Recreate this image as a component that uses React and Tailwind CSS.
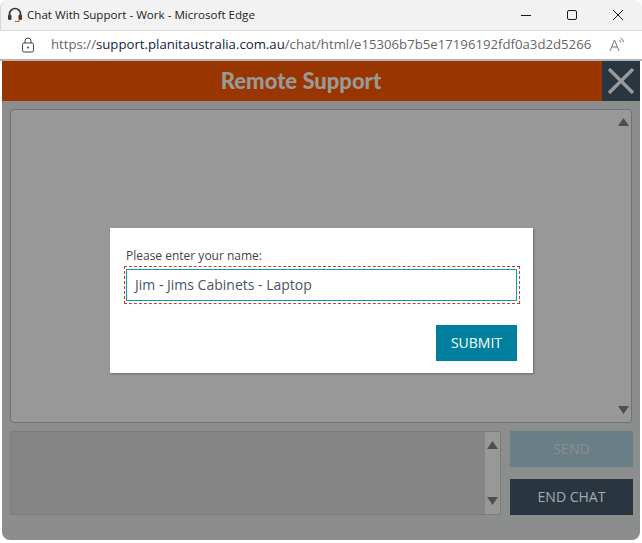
import React from "react";

const ScrollUp = () => (
  <svg width="11" height="8" viewBox="0 0 11 8"><path d="M5.5 0 L11 8 L0 8 Z" fill="#4f4f4f" /></svg>
);
const ScrollDown = () => (
  <svg width="11" height="8" viewBox="0 0 11 8"><path d="M0 0 L11 0 L5.5 8 Z" fill="#4f4f4f" /></svg>
);

const App = () => {
  return (
    <div className="relative w-[642px] h-[543px] overflow-hidden bg-white font-['Open_Sans',sans-serif]">
      {/* Edge title bar */}
      <div className="h-[30px] bg-[#f2f2f2] flex items-center border-l border-[#d8d8d8] rounded-tl-lg rounded-tr-lg">
        <svg className="ml-[6px] shrink-0" width="16" height="16" viewBox="0 0 16 16" fill="none">
          <path d="M2.5 9 V7 A5.5 5.5 0 0 1 13.5 7 V9" stroke="#333" strokeWidth="1.6" />
          <rect x="1" y="7.5" width="3.5" height="5.5" rx="1.5" fill="#3a3a3a" />
          <rect x="11.5" y="7.5" width="3.5" height="5.5" rx="1.5" fill="#3a3a3a" />
          <path d="M8 14.5 H11.5 L13 12.5" stroke="#d9541e" strokeWidth="1.2" />
        </svg>
        <span className="ml-[4px] text-[11.6px] leading-none text-[#222]">Chat With Support - Work - Microsoft Edge</span>
        <div className="ml-auto flex items-center">
          <svg className="mr-[36px]" width="10" height="10" viewBox="0 0 10 10"><path d="M0 5.5 H10" stroke="#1a1a1a" strokeWidth="1" /></svg>
          <svg className="mr-[36px]" width="10" height="10" viewBox="0 0 10 10" fill="none"><rect x="0.5" y="0.5" width="9" height="9" rx="1.5" stroke="#1a1a1a" /></svg>
          <svg className="mr-[19px]" width="10" height="10" viewBox="0 0 10 10"><path d="M0 0 L10 10 M10 0 L0 10" stroke="#1a1a1a" strokeWidth="1" /></svg>
        </div>
      </div>

      {/* Address bar */}
      <div className="h-[31px] bg-white border-t border-b-2 border-t-[#dcdcdc] border-b-[#b5b5b5] flex items-center">
        <svg className="ml-[21px] shrink-0" width="14" height="16" viewBox="0 0 14 16" fill="none">
          <rect x="1.5" y="6" width="11" height="9" rx="1.5" stroke="#444" />
          <path d="M4 6 V4 A3 3 0 0 1 10 4 V6" stroke="#444" />
          <circle cx="7" cy="10.5" r="1" fill="#444" />
        </svg>
        <span className="ml-[16px] text-[13.2px] leading-none whitespace-nowrap text-[#666]">
          https://<span className="text-[#10243e]">support.planitaustralia.com.au</span>/chat/html/e15306b7b5e17196192fdf0a3d2d5266
        </span>
        <svg className="ml-auto mr-[16px] shrink-0" width="17" height="16" viewBox="0 0 17 16" fill="none">
          <path d="M1 14 L5.5 3 L10 14 M2.8 10 H8.2" stroke="#777" strokeWidth="1" />
          <path d="M10 3 A3 3 0 0 1 12 5.5 M11.5 1 A5 5 0 0 1 14.5 5" stroke="#777" strokeWidth="1" />
        </svg>
      </div>

      {/* Chat page, dimmed */}
      <div className="mx-[2px] h-[479px] bg-[#8c8e8d] rounded-b-lg flex flex-col">
        <div className="h-[40px] bg-[#993600] flex">
          <div className="flex-1 flex items-center justify-center pb-[2px] pr-[2px] text-[22px] font-black text-[#999] font-['Lato',sans-serif]">
            Remote Support
          </div>
          <div className="w-[38px] bg-[#293640] flex items-center justify-center">
            <svg width="26" height="26" viewBox="0 0 26 26"><path d="M1 1 L25 25 M25 1 L1 25" stroke="#999" strokeWidth="3.4" /></svg>
          </div>
        </div>

        <div className="flex-1 flex flex-col pl-[8px] pr-[7px] pt-[8px]">
          <div className="w-[622px] h-[314px] bg-[#989898] border border-[#6f7375] rounded-[4px] flex flex-col items-end justify-between pr-[2px] pt-[8px] pb-[8px]">
            <ScrollUp />
            <ScrollDown />
          </div>
          <div className="mt-[8px] h-[84px] flex">
            <div className="w-[491px] bg-[#858585] border border-[#7b7d7c] flex justify-end">
              <div className="w-[15px] bg-[#989898] flex flex-col items-center justify-between py-[9px]">
                <ScrollUp />
                <ScrollDown />
              </div>
            </div>
            <div className="ml-[9px] flex-1 flex flex-col justify-between">
              <div className="h-[36px] pb-[2px] bg-[#6a7e85] flex items-center justify-center text-[14px] text-[#8b8f90]">SEND</div>
              <div className="h-[36px] pb-[2px] bg-[#293640] flex items-center justify-center text-[14px] text-[#a8abad]">END CHAT</div>
            </div>
          </div>
        </div>
      </div>

      {/* Name dialog */}
      <div className="absolute left-[110px] top-[228px] w-[423px] h-[145px] bg-white shadow-[1px_1px_2px_rgba(0,0,0,0.3)] pl-[14px] pr-[13px] pt-[20px]">
        <div className="pl-[2px] text-[12px] leading-[16px] text-[#444]">Please enter your name:</div>
        <div className="mt-[2px] border border-dashed border-[#c0440c] pl-[1px] pr-[2px] py-[2px]">
          <div className="h-[32px] pb-[2px] border border-[#0f9bb5] flex items-center pl-[8px] text-[14px] text-[#4a5560]">
            Jim - Jims Cabinets - Laptop
          </div>
        </div>
        <div className="mt-[21px] flex justify-end pr-[3px]">
          <div className="w-[81px] h-[36px] pb-[2px] bg-[#007f9f] flex items-center justify-center text-[14px] text-white">SUBMIT</div>
        </div>
      </div>
    </div>
  );
};

export default App;
